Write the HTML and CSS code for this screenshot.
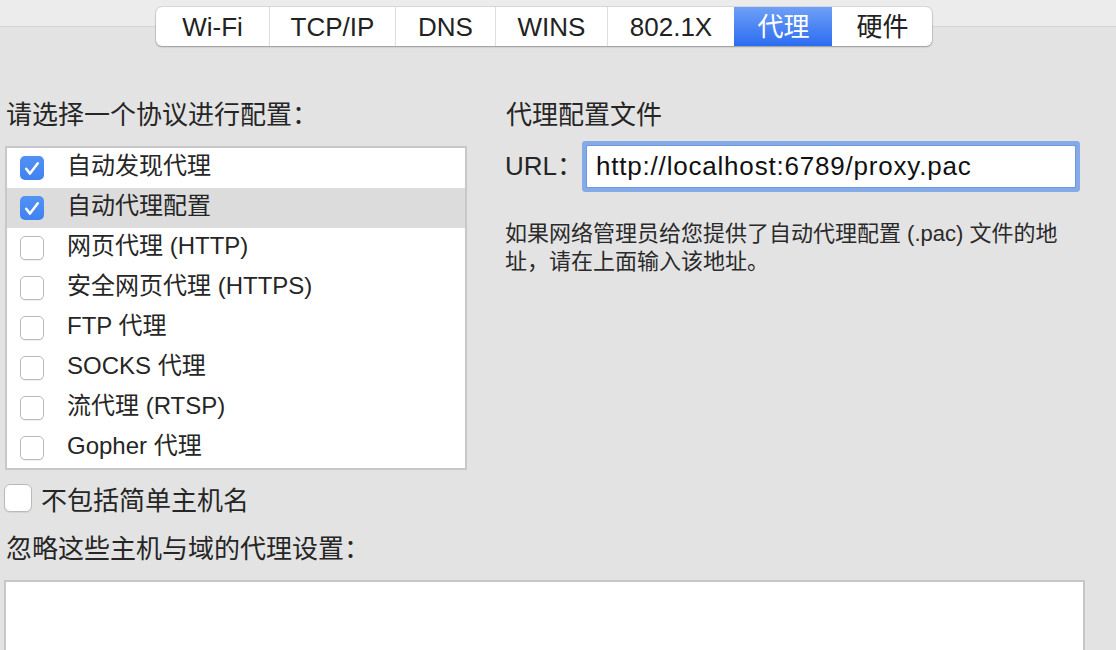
FILE: index.html
```html
<!DOCTYPE html>
<html lang="zh-CN">
<head>
<meta charset="utf-8">
<title>代理</title>
<link rel="stylesheet" href="styles.css">
</head>
<body>
<div class="window">
  <nav class="tabs">
    <div class="tab">Wi-Fi</div>
    <div class="tab">TCP/IP</div>
    <div class="tab">DNS</div>
    <div class="tab">WINS</div>
    <div class="tab">802.1X</div>
    <div class="tab active">代理</div>
    <div class="tab">硬件</div>
  </nav>

  <main class="panes">
    <section class="left">
      <div class="label">请选择一个协议进行配置：</div>
      <ul class="protocols">
        <li class="item"><span class="cb on"><svg viewBox="0 0 24 24"><path d="M6.2 12.8 L10 17.6 L17.8 7.2"/></svg></span><span class="item-text">自动发现代理</span></li>
        <li class="item selected"><span class="cb on"><svg viewBox="0 0 24 24"><path d="M6.2 12.8 L10 17.6 L17.8 7.2"/></svg></span><span class="item-text">自动代理配置</span></li>
        <li class="item"><span class="cb"></span><span class="item-text">网页代理 (HTTP)</span></li>
        <li class="item"><span class="cb"></span><span class="item-text">安全网页代理 (HTTPS)</span></li>
        <li class="item"><span class="cb"></span><span class="item-text">FTP 代理</span></li>
        <li class="item"><span class="cb"></span><span class="item-text">SOCKS 代理</span></li>
        <li class="item"><span class="cb"></span><span class="item-text">流代理 (RTSP)</span></li>
        <li class="item"><span class="cb"></span><span class="item-text">Gopher 代理</span></li>
      </ul>
    </section>

    <section class="right">
      <div class="label">代理配置文件</div>
      <div class="url-row">
        <span class="url-label">URL：</span>
        <div class="field">http://localhost:6789/proxy.pac</div>
      </div>
      <p class="desc">如果网络管理员给您提供了自动代理配置 (.pac) 文件的地址，请在上面输入该地址。</p>
    </section>
  </main>

  <div class="simple">
    <span class="cb big"></span>
    <span class="simple-text">不包括简单主机名</span>
  </div>
  <div class="bypass-label">忽略这些主机与域的代理设置：</div>
  <div class="bypass"></div>
</div>
</body>
</html>
```

FILE: styles.css
```css
* {
  box-sizing: border-box;
}

html,
body {
  margin: 0;
  height: 100%;
}

body {
  font-family: "Liberation Sans", "Noto Sans CJK SC", sans-serif;
  color: #262626;
  background-color: #e3e3e3;
  background-image: linear-gradient(#ececec 0, #ececec 26px, #d6d6d6 26px, #d6d6d6 27px);
  background-size: 100% 27px;
  background-repeat: no-repeat;
  overflow: hidden;
}

.window {
  width: 1116px;
  height: 650px;
  overflow: hidden;
}

/* ---------- segmented tabs ---------- */
.tabs {
  display: flex;
  width: max-content;
  height: 39px;
  margin: 7px 0 0 156px;
  background: #fff;
  border-radius: 6px;
  box-shadow: 0 0 0 1px rgba(0, 0, 0, 0.08), 0 1px 2px rgba(0, 0, 0, 0.28);
  overflow: hidden;
}

.tab {
  font-size: 26px;
  line-height: 40px;
  text-align: center;
  color: #222;
  border-left: 1px solid #dedede;
  white-space: nowrap;
}

.tab:nth-child(1) { width: 113px; border-left: 0; }
.tab:nth-child(2) { width: 126px; }
.tab:nth-child(3) { width: 100px; }
.tab:nth-child(4) { width: 112px; }
.tab:nth-child(5) { width: 127px; }
.tab:nth-child(6) { width: 98px; }
.tab:nth-child(7) { width: 100px; }

.tab.active {
  color: #fff;
  border-left-color: transparent;
  background: linear-gradient(#6fa0f6, #2b6cf1);
}

.tab.active + .tab {
  border-left-color: transparent;
}

/* ---------- panes ---------- */
.panes {
  display: flex;
  margin-top: 54px;
  padding-left: 5px;
}

.left {
  width: 462px;
}

.right {
  width: 574px;
  margin-left: 38px;
}

.label {
  font-size: 26px;
  line-height: 30px;
  padding-left: 1px;
  white-space: nowrap;
}

.protocols {
  list-style: none;
  margin: 16px 0 0;
  padding: 0;
  background: #fff;
  border: 2px solid #c8c8c8;
}

.item {
  display: flex;
  align-items: center;
  height: 40px;
  padding-left: 13px;
  font-size: 24px;
}

.item.selected {
  background: #dcdcdc;
}

.item-text {
  margin-left: 23px;
  margin-bottom: 5px;
  line-height: 30px;
  white-space: nowrap;
}

/* ---------- checkboxes ---------- */
.cb {
  display: inline-flex;
  flex: none;
  width: 24px;
  height: 24px;
  border-radius: 5px;
  background: #fff;
  border: 1px solid #b9b9b9;
  box-shadow: 0 1px 1px rgba(0, 0, 0, 0.07);
}

.cb.on {
  border: 0;
  background: linear-gradient(#5392f4, #3e81f1);
  box-shadow: none;
}

.cb svg {
  width: 24px;
  height: 24px;
}

.cb path {
  fill: none;
  stroke: #fff;
  stroke-width: 2.5;
  stroke-linecap: round;
  stroke-linejoin: round;
}

.cb.big {
  width: 28px;
  height: 28px;
  border-radius: 6px;
}

/* ---------- right pane ---------- */
.url-row {
  display: flex;
  align-items: center;
  margin-top: 16px;
}

.url-label {
  width: 82px;
  font-size: 26px;
  line-height: 41px;
  white-space: nowrap;
}

.field {
  width: 488px;
  height: 41px;
  padding-left: 9px;
  font-size: 26px;
  line-height: 41px;
  letter-spacing: 0.8px;
  color: #111;
  background: #fff;
  border-radius: 1px;
  box-shadow: 0 0 0 1px #6f97df, 0 0 0 5px #84aae8;
  white-space: nowrap;
}

.desc {
  max-width: 564px;
  margin: 33px 0 0;
  font-size: 22px;
  line-height: 28px;
  color: #2a2a2a;
}

/* ---------- bottom ---------- */
.simple {
  display: flex;
  align-items: center;
  height: 36px;
  margin-top: 10px;
  padding-left: 4px;
}

.simple-text {
  margin-left: 9px;
  font-size: 26px;
  white-space: nowrap;
}

.bypass-label {
  margin-top: 18px;
  padding-left: 6px;
  font-size: 26px;
  line-height: 30px;
  white-space: nowrap;
}

.bypass {
  width: 1081px;
  height: 120px;
  margin: 16px 0 0 4px;
  background: #fff;
  border: 2px solid #c6c6c6;
}
```
